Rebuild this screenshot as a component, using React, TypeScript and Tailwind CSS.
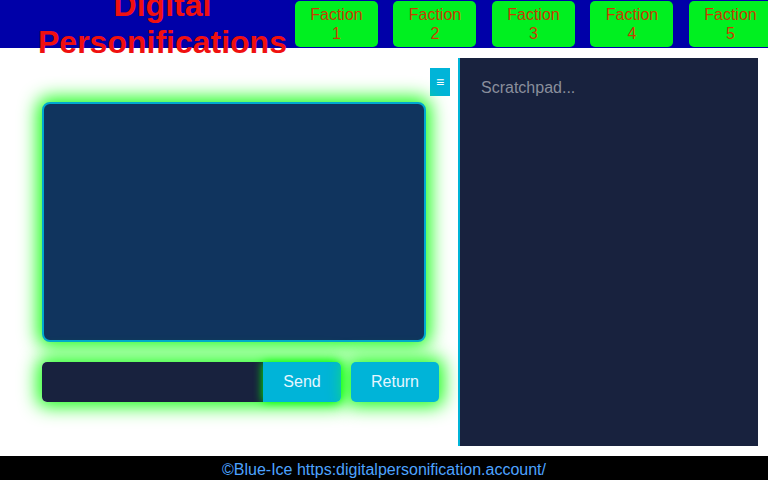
import React from "react";

const factions = ["1", "2", "3", "4", "5"];

const App = () => {
  return (
    <div
      className="flex h-[480px] w-[768px] flex-col overflow-hidden bg-white"
      style={{ fontFamily: '"Liberation Sans", Arial, sans-serif' }}
    >
      {/* Header */}
      <header className="relative z-10 flex h-12 shrink-0 items-center bg-[#0000a8]">
        <h1 className="ml-[38px] mr-2 shrink-0 text-center text-[32px] font-bold leading-[1.15] text-[#f01010]">
          Digital
          <br />
          Personifications
        </h1>
        <nav className="flex shrink-0 gap-[15.5px]">
          {factions.map((n) => (
            <button
              key={n}
              className="flex h-[46px] w-[83px] shrink-0 flex-col items-center justify-center rounded-[5px] bg-[#00f020] text-base leading-[19px] text-[#c83c00]"
            >
              <span>Faction</span>
              <span>{n}</span>
            </button>
          ))}
        </nav>
      </header>

      {/* Main */}
      <main className="flex min-h-0 flex-1">
        <section className="flex w-[458px] shrink-0 flex-col">
          <div className="flex justify-end pr-2 pt-5">
            <button className="flex h-7 w-5 items-center justify-center bg-[#00b4d8] text-sm text-white">
              ≡
            </button>
          </div>

          <div className="ml-[42px] mt-[6px] h-[240px] w-[384px] rounded-lg border-2 border-[#00a8d0] bg-[#10345e] shadow-[0_0_18px_5px_#22ff22]" />

          <div className="ml-[42px] mt-5 flex h-10 w-[397px] gap-[10px]">
            <div className="flex flex-1 rounded-[5px] shadow-[0_0_18px_5px_#22ff22]">
              <input
                className="h-10 w-[221px] rounded-l-[5px] bg-[#18223e] px-3 text-white outline-none"
                type="text"
              />
              <button className="h-10 flex-1 rounded-r-[5px] bg-[#00b4d8] text-base text-[#e6f6ff] shadow-[0_0_10px_#00ff00]">
                Send
              </button>
            </div>
            <button className="h-10 w-[88px] rounded-[5px] bg-[#00b4d8] text-base text-[#e6f6ff] shadow-[0_0_18px_5px_#22ff22]">
              Return
            </button>
          </div>
        </section>

        <section className="my-[10px] mr-[10px] flex-1 border-l-2 border-[#00b4d8] bg-[#18223e]">
          <textarea
            className="h-full w-full resize-none bg-transparent px-[21px] py-[18px] text-base text-white outline-none placeholder:text-[#8a8f9c]"
            placeholder="Scratchpad..."
          />
        </section>
      </main>

      {/* Footer */}
      <footer className="flex h-6 shrink-0 items-center justify-center bg-black pt-[3px] text-base text-[#4da3ff]">
        ©Blue-Ice https:digitalpersonification.account/
      </footer>
    </div>
  );
};

export default App;
